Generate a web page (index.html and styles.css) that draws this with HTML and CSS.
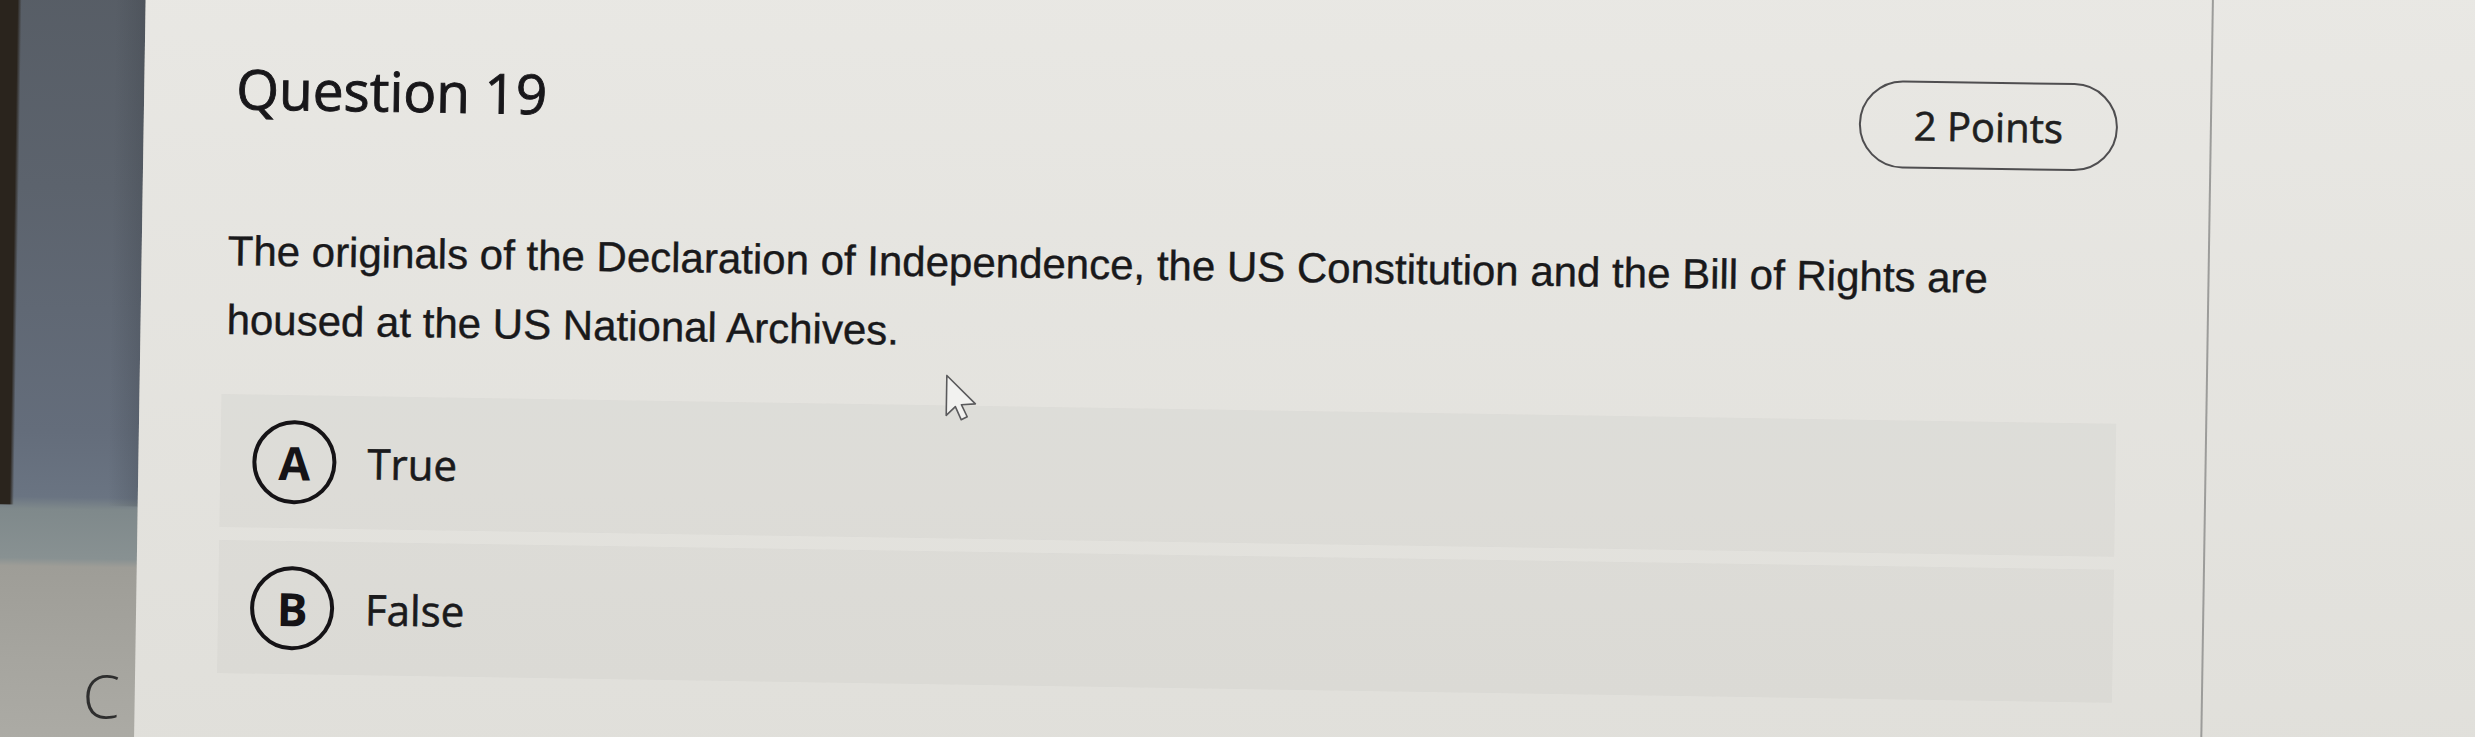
FILE: index.html
```html
<!DOCTYPE html>
<html lang="en">
<head>
    <meta charset="UTF-8">
    <meta name="viewport" content="width=device-width, initial-scale=1.0">
    <title>Question 19</title>
    <link rel="stylesheet" href="styles.css">
</head>
<body>
    <div class="screen">
        <aside class="sidebar">
            <span class="sidebar-letter">C</span>
        </aside>

        <main class="page">
            <section class="question">
                <header class="question-head">
                    <h2 class="question-title">Question 19</h2>
                    <span class="points">2 Points</span>
                </header>

                <p class="question-text">The originals of the Declaration of Independence, the US Constitution and the Bill of Rights are housed at the US National Archives.</p>

                <ul class="choices">
                    <li class="choice">
                        <span class="choice-key">A</span>
                        <span class="choice-label">True</span>
                    </li>
                    <li class="choice">
                        <span class="choice-key">B</span>
                        <span class="choice-label">False</span>
                    </li>
                </ul>
            </section>

            <div class="side-pane"></div>

            <!-- puntero del raton -->
            <svg class="cursor" viewBox="0 0 34 48">
                <path d="M2 2 L2 42 L11 33 L17 46 L23 43 L17 31 L31 30 Z" fill="#f2f2f0" stroke="#5a5a5c" stroke-width="1.6" stroke-linejoin="round"/>
            </svg>
        </main>
    </div>
</body>
</html>
```

FILE: styles.css
```css
body {
    margin: 0;
    width: 2475px;
    height: 737px;
    overflow: hidden;
    background-color: #a6a5a0;
}

/* la pantalla fotografiada esta un poco girada */
.screen {
    display: flex;
    width: 2555px;
    height: 817px;
    margin: -40px 0 0 -40px;
    transform: rotate(0.9deg);
    transform-origin: 1277px 408px;
}

.sidebar {
    width: 180px;
    flex: none;
    box-sizing: border-box;
    display: flex;
    align-items: flex-end;
    padding: 0 0 34px 128px;
    background:
        linear-gradient(to right, #2a241d 0, #2a241d 52px, transparent 56px) 0 0 / 100% 69% no-repeat,
        linear-gradient(to right, transparent 150px, rgba(30, 35, 40, 0.16) 180px) 0 0 / 100% 69% no-repeat,
        linear-gradient(to bottom, #565c64 0%, #5c636d 30%, #646d7b 60%, #6a7482 68%, #7f898b 69.5%, #889192 75.5%, #9e9d97 76.5%, #a6a59f 88%, #adaca6 100%);
}

.sidebar-letter {
    font: 300 60px/60px "Open Sans", sans-serif;
    color: #2e2e2e;
}

.page {
    flex: 1;
    position: relative;
    display: flex;
    background: linear-gradient(to bottom, #e9e8e4, #e0dfda);
}

.question {
    flex: none;
    width: 2068px;
    box-sizing: border-box;
    padding: 110px 89px 0 82px;
    border-right: 2px solid #9c9c9a;
}

.question-head {
    display: flex;
    justify-content: space-between;
    align-items: flex-start;
}

.question-title {
    margin: 0 0 0 10px;
    font: 500 55px/68px "Open Sans", sans-serif;
    color: #18171a;
    -webkit-text-stroke: 0.9px #18171a;
}

.points {
    box-sizing: border-box;
    width: 259px;
    height: 88px;
    margin-right: 3px;
    border: 2.5px solid #4f4e50;
    border-radius: 44px;
    display: flex;
    align-items: center;
    justify-content: center;
    font: 500 40px "Open Sans", sans-serif;
    color: #1f1f21;
    -webkit-text-stroke: 0.6px #1f1f21;
}

.question-text {
    margin: 74px 60px 0 4px;
    font: 400 42px/69px "Liberation Sans", Arial, sans-serif;
    color: #19191b;
    -webkit-text-stroke: 0.4px #19191b;
}

.choices {
    list-style: none;
    margin: 40px 0 0;
    padding: 0;
    display: flex;
    flex-direction: column;
    gap: 13px;
}

.choice {
    height: 133px;
    display: flex;
    align-items: center;
    gap: 31px;
    padding-left: 32px;
    background-color: rgba(60, 55, 45, 0.035);
}

.choice-key {
    box-sizing: border-box;
    width: 84px;
    height: 84px;
    border: 4.5px solid #151316;
    border-radius: 50%;
    display: flex;
    align-items: center;
    justify-content: center;
    font: 700 46px "Open Sans", sans-serif;
    color: #151316;
}

.choice-label {
    font: 500 42px "Open Sans", sans-serif;
    color: #1a1a1c;
    -webkit-text-stroke: 0.6px #1a1a1c;
}

.side-pane {
    flex: 1;
}

.cursor {
    position: absolute;
    left: 805px;
    top: 418px;
    width: 34px;
    height: 48px;
}
```
